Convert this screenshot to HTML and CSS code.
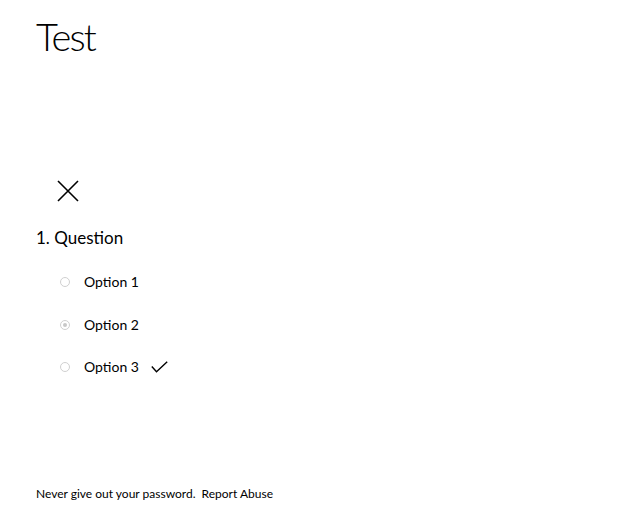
FILE: index.html
```html
<!DOCTYPE html>
<html>
<head>
<meta charset="utf-8">
<link rel="stylesheet" href="styles.css">
</head>
<body>
<div class="page">
  <h1 class="title">Test</h1>
  <div class="status">
    <svg class="x-icon" width="22" height="22" viewBox="0 0 22 22"><path d="M1 1L21 21M21 1L1 21" stroke="#000" stroke-width="1.6" fill="none"/></svg>
  </div>
  <div class="question">1. Question</div>
  <ul class="options">
    <li class="option"><span class="radio"></span><span class="label">Option 1</span></li>
    <li class="option"><span class="radio checked"></span><span class="label">Option 2</span></li>
    <li class="option"><span class="radio"></span><span class="label">Option 3</span>
      <svg class="check" width="17" height="12" viewBox="0 0 17 12"><path d="M0.8 5.5L5.5 10.8L16.2 0.8" stroke="#000" stroke-width="1.4" fill="none"/></svg>
    </li>
  </ul>
  <div class="footer">Never give out your password.&nbsp; Report Abuse</div>
</div>
</body>
</html>
```
FILE: styles.css
```css
html, body { margin: 0; padding: 0; background: #fff; }
body { font-family: Lato, "Open Sans", sans-serif; color: #000; }
.page { padding: 0 36px; }
.title {
  margin: 0;
  padding-top: 10px;
  font-size: 38px;
  font-weight: 300;
  line-height: 52px;
  letter-spacing: -1.8px;
}
.status { padding-top: 118px; padding-left: 21px; height: 22px; }
.x-icon { display: block; }
.question { margin-top: 24px; font-size: 17px; line-height: 24px; }
.options { list-style: none; margin: 11px 0 0; padding: 0 0 0 24px; }
.option { display: flex; align-items: center; height: 42.5px; font-size: 14px; }
.radio {
  width: 8px; height: 8px; border: 1px solid #d0d0d0; border-radius: 50%;
  box-sizing: content-box; margin-right: 14px; position: relative;
}
.radio.checked::after {
  content: ""; position: absolute; left: 2px; top: 2px; width: 4px; height: 4px;
  border-radius: 50%; background: #c8c8c8;
}
.label { line-height: 20px; }
.check { margin-left: 12px; }
.footer { margin-top: 97px; font-size: 12px; }
```
